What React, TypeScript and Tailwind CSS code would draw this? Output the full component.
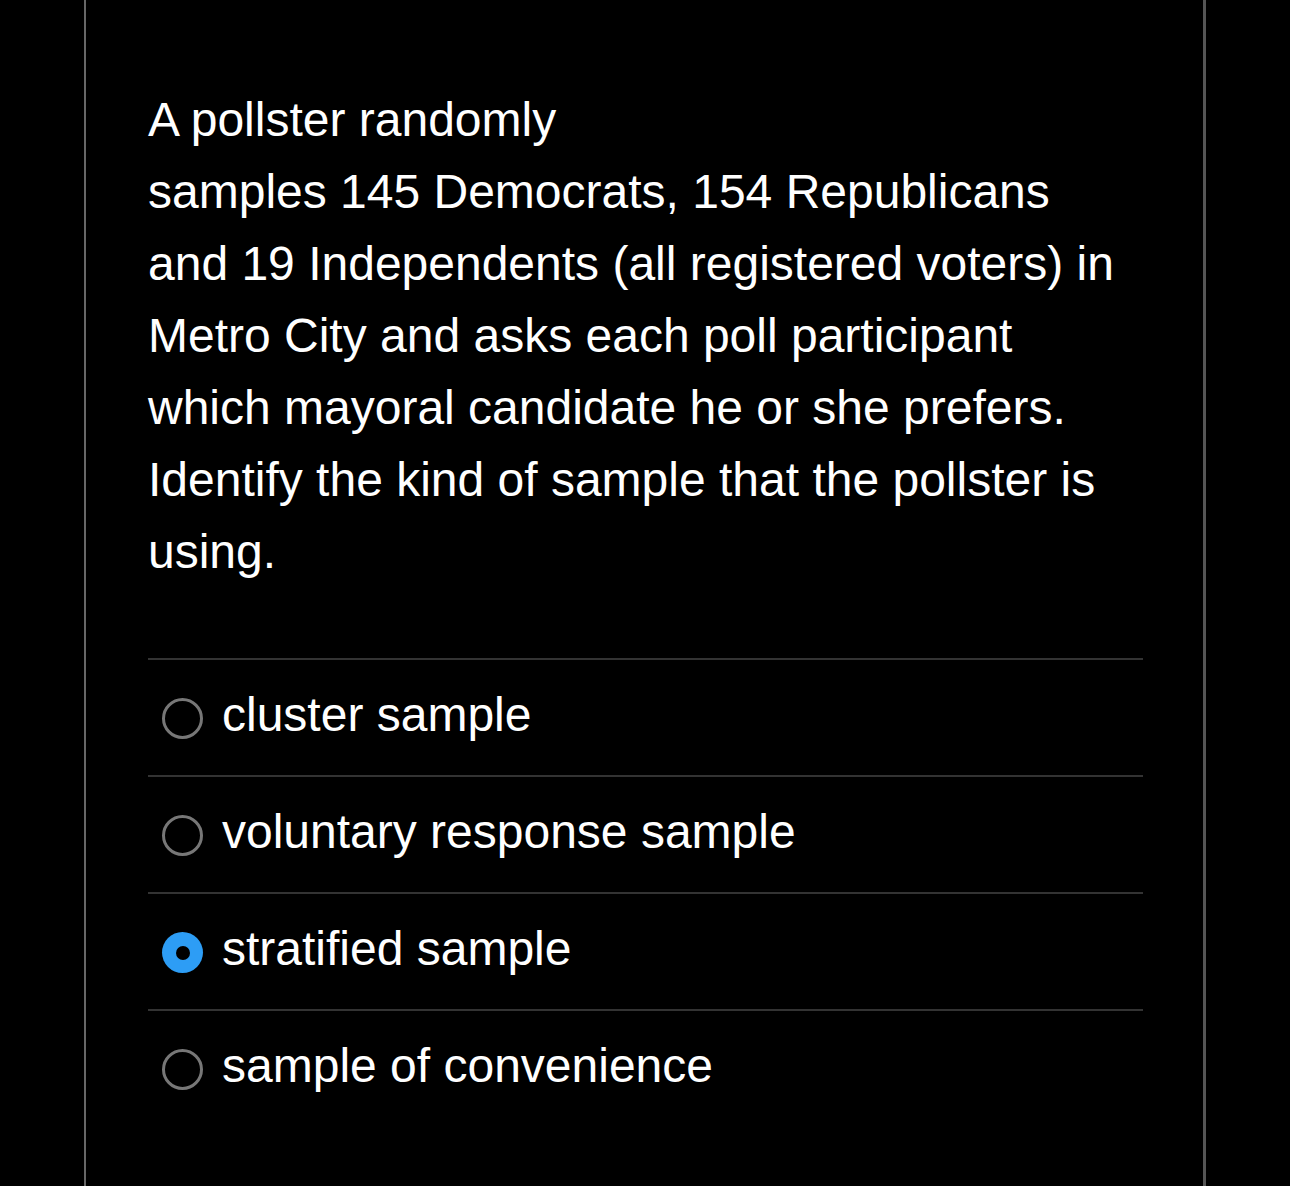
import React from "react";

const options = [
  { label: "cluster sample", selected: false },
  { label: "voluntary response sample", selected: false },
  { label: "stratified sample", selected: true },
  { label: "sample of convenience", selected: false },
];

const lines = [
  "A pollster randomly",
  "samples 145 Democrats, 154 Republicans",
  "and 19 Independents (all registered voters) in",
  "Metro City and asks each poll participant",
  "which mayoral candidate he or she prefers.",
  "Identify the kind of sample that the pollster is",
  "using.",
];

export default function App() {
  return (
    <div className="min-h-[1186px] w-[1290px] bg-black flex justify-center" style={{ fontFamily: '"Liberation Sans", Arial, sans-serif' }}>
      <div className="ml-[84px] mr-[84px] flex-1 border-l-2 border-r-[3px] border-l-[#676767] border-r-[#555555] min-h-[1186px]">
        <div className="pl-[62px] pr-[60px] pt-[84px]">
          <p className="text-white text-[48px] leading-[72px] whitespace-nowrap">
            {lines.map((l, i) => (
              <React.Fragment key={i}>
                {l}
                {i < lines.length - 1 && <br />}
              </React.Fragment>
            ))}
          </p>
          <div className="mt-[70px]">
            {options.map((o) => (
              <div key={o.label} className="flex items-center h-[117px] border-t-2 border-[#333333]">
                <div className="w-[74px] pl-[14px] pt-[2px] flex items-center">
                  {o.selected ? (
                    <div className="w-[41px] h-[41px] rounded-full bg-[#2d9df5] flex items-center justify-center">
                      <div className="w-[14px] h-[14px] rounded-full bg-black" />
                    </div>
                  ) : (
                    <div className="w-[41px] h-[41px] rounded-full border-[3px] border-[#777777]" />
                  )}
                </div>
                <span className="text-white text-[48px] leading-[56px] pb-[5px]">{o.label}</span>
              </div>
            ))}
          </div>
        </div>
      </div>
    </div>
  );
}
